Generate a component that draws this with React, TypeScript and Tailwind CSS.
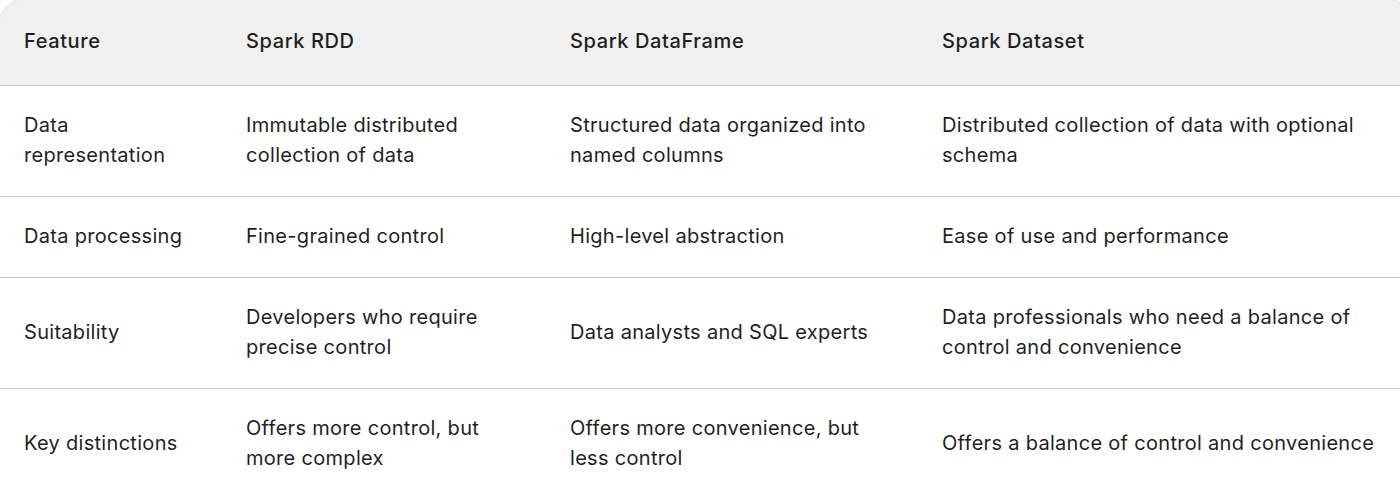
const rows = [
  {
    feature: "Data representation",
    rdd: "Immutable distributed collection of data",
    df: "Structured data organized into named columns",
    ds: "Distributed collection of data with optional schema",
  },
  {
    feature: "Data processing",
    rdd: "Fine-grained control",
    df: "High-level abstraction",
    ds: "Ease of use and performance",
  },
  {
    feature: "Suitability",
    rdd: "Developers who require precise control",
    df: "Data analysts and SQL experts",
    ds: "Data professionals who need a balance of control and convenience",
  },
  {
    feature: "Key distinctions",
    rdd: "Offers more control, but more complex",
    df: "Offers more convenience, but less control",
    ds: "Offers a balance of control and convenience",
  },
];

export default function App() {
  return (
    <div className="h-[493px] w-[1400px] overflow-hidden bg-white">
      <div
        className="-ml-[2px] -mt-[2px] w-[1414px] overflow-hidden rounded-t-[28px] border border-[#d6d6d6] text-[20px] leading-[30px] tracking-[0.3px] text-[#1f1f1f]"
        style={{ fontFamily: "Inter, 'Noto Sans', sans-serif" }}
      >
        <table className="w-full table-fixed border-collapse">
          <colgroup>
            <col className="w-[223px]" />
            <col className="w-[324px]" />
            <col className="w-[372px]" />
            <col />
          </colgroup>
          <thead>
            <tr className="bg-[#f0f0f0] text-left tracking-[0.6px]">
              <th className="pl-[25px] pr-6 pt-[27px] pb-[29px] align-middle font-medium">Feature</th>
              <th className="px-6 pt-[27px] pb-[29px] align-middle font-medium">Spark RDD</th>
              <th className="px-6 pt-[27px] pb-[29px] align-middle font-medium">Spark DataFrame</th>
              <th className="px-6 pt-[27px] pb-[29px] align-middle font-medium">Spark Dataset</th>
            </tr>
          </thead>
          <tbody>
            {rows.map((r) => (
              <tr key={r.feature} className="border-t border-[#c7c7c7]">
                <td className="pl-[25px] pr-6 pt-[24px] pb-[26px] align-middle">{r.feature}</td>
                <td className="px-6 pt-[24px] pb-[26px] align-middle">{r.rdd}</td>
                <td className="px-6 pt-[24px] pb-[26px] align-middle">{r.df}</td>
                <td className="px-6 pt-[24px] pb-[26px] align-middle">{r.ds}</td>
              </tr>
            ))}
          </tbody>
        </table>
      </div>
    </div>
  );
}
